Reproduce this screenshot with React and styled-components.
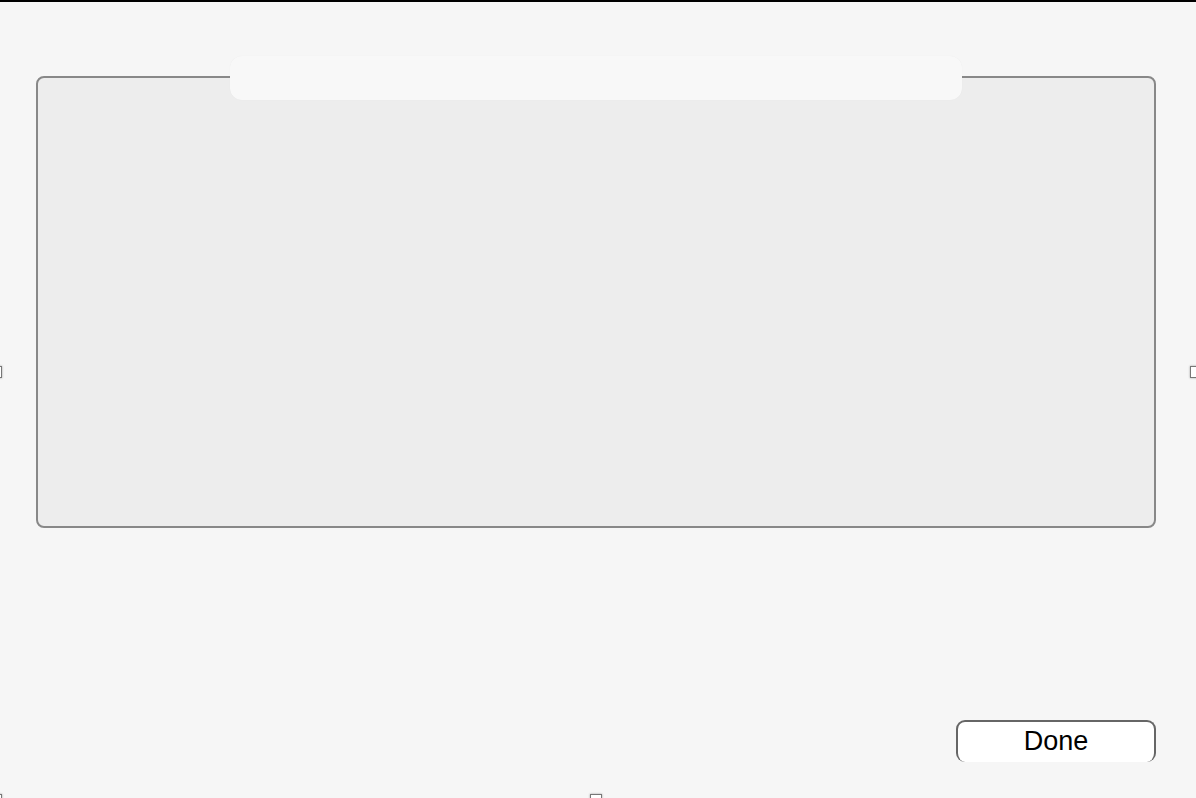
import React from "react";
import styled, { createGlobalStyle } from "styled-components";

const Global = createGlobalStyle`
  html, body { margin: 0; padding: 0; background: #f6f6f6; }
  body { font-family: "Liberation Sans", Arial, sans-serif; overflow: hidden; }
`;

const Window = styled.div`
  position: relative;
  width: 1196px;
  height: 798px;
  box-sizing: border-box;
  border-top: 2px solid #000;
  background: #f6f6f6;
  display: flex;
  flex-direction: column;
  padding: 54px 40px 0 36px;
  overflow: hidden;
`;

const PanelWrap = styled.div`
  position: relative;
  padding-top: 20px;
`;

const TabStrip = styled.div`
  position: absolute;
  top: 0;
  left: 50%;
  transform: translateX(-50%);
  width: 732px;
  height: 44px;
  border-radius: 12px;
  background: #f8f8f8;
  box-shadow: 0 0 1px rgba(0, 0, 0, 0.06);
`;

const Panel = styled.div`
  height: 452px;
  box-sizing: border-box;
  border: 2px solid #888;
  border-radius: 8px;
  background: #ededed;
`;

const Footer = styled.div`
  margin-top: auto;
  display: flex;
  justify-content: flex-end;
  padding-bottom: 36px;
`;

const DoneButton = styled.button`
  width: 200px;
  height: 42px;
  box-sizing: border-box;
  background: #fff;
  border: 2px solid #666;
  border-bottom: 0;
  border-radius: 9px;
  font-family: "Liberation Sans", Arial, sans-serif;
  font-size: 27px;
  color: #000;
  padding: 0 0 2px;
`;

const Handle = styled.div`
  position: absolute;
  width: 12px;
  height: 12px;
  box-sizing: border-box;
  background: #fff;
  border: 1px solid #777;
  box-shadow: 0 0 2px rgba(0, 0, 0, 0.35);
  left: ${(p) => p.$x}px;
  top: ${(p) => p.$y}px;
`;

export default function App() {
  return (
    <>
      <Global />
      <Window>
        <PanelWrap>
          <TabStrip />
          <Panel />
        </PanelWrap>
        <Footer>
          <DoneButton>Done</DoneButton>
        </Footer>
        <Handle $x={-10} $y={364} />
        <Handle $x={1190} $y={364} />
        <Handle $x={590} $y={792} />
        <Handle $x={-10} $y={792} />
      </Window>
    </>
  );
}
